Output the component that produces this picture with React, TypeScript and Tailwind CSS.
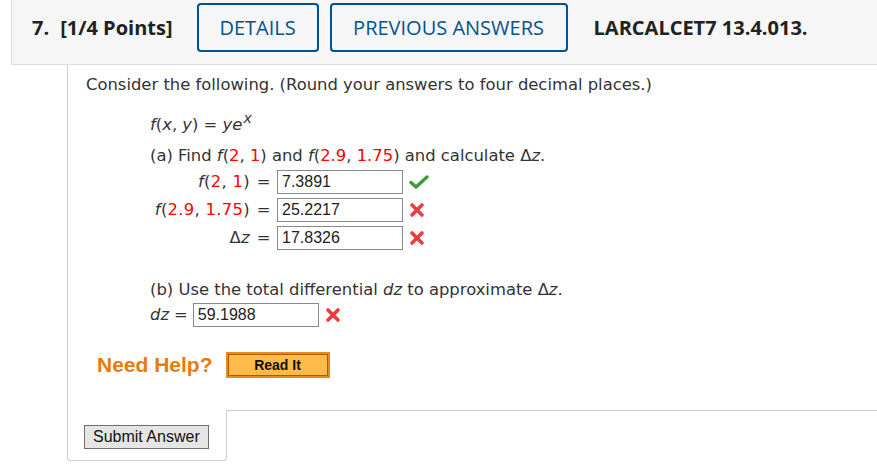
import React from 'react';

const body = { fontFamily: '"DejaVu Sans", Verdana, sans-serif' };
const arial = { fontFamily: '"Liberation Sans", Arial, sans-serif' };

function Check() {
  return (
    <svg width="20" height="14" viewBox="0 0 20 14" className="ml-[6px]">
      <path d="M2 7.5 L7 12 L18 2" fill="none" stroke="#3f9b35" strokeWidth="3.4" strokeLinecap="round" strokeLinejoin="round" />
    </svg>
  );
}

function Cross() {
  return (
    <svg width="16" height="16" viewBox="0 0 16 16" className="ml-[6px]">
      <path d="M3 3 L13 13 M13 3 L3 13" stroke="#ee3b3b" strokeWidth="3.6" strokeLinecap="round" />
    </svg>
  );
}

function R({ children }: { children: React.ReactNode }) {
  return <span className="text-[#ff0000]">{children}</span>;
}

function Row({ label, value, ok }: { label: React.ReactNode; value: string; ok: boolean }) {
  return (
    <div className="flex items-center h-[28px]">
      <div className="w-[100px] text-right whitespace-nowrap tracking-[0.3px]">{label}</div>
      <div className="w-[27px] text-center">=</div>
      <div className="w-[126px] h-[24px] border border-[#8a8a8a] pl-[4px] text-[16px] leading-[22px] text-[#222]" style={arial}>
        {value}
      </div>
      {ok ? <Check /> : <Cross />}
    </div>
  );
}

export default function App() {
  return (
    <div className="w-[877px] h-[472px] bg-white overflow-hidden text-[#333]">
      {/* header */}
      <div className="ml-[11px] h-[65px] bg-[#f6f6f6] border-l border-b border-[#dddddd] flex items-start pt-[3px] font-['Open_Sans',sans-serif] text-[20px]">
        <div className="flex items-center h-[49px] pl-[20px] font-bold text-[#222]">
          <span>7.</span>
          <span className="ml-[11px]">[1/4 Points]</span>
        </div>
        <div className="ml-[24px] h-[49px] w-[122px] border-2 border-[#00538f] rounded-[4px] flex items-center justify-center text-[#00538f]">
          DETAILS
        </div>
        <div className="ml-[11px] h-[49px] w-[238px] border-2 border-[#00538f] rounded-[4px] flex items-center justify-center text-[#00538f]">
          PREVIOUS ANSWERS
        </div>
        <div className="ml-[26px] h-[49px] flex items-center font-bold text-[#222]">LARCALCET7 13.4.013.</div>
      </div>

      {/* content */}
      <div className="ml-[67px] border-l border-[#cccccc] pl-[18px] pt-[8px] h-[345px] text-[16.4px] leading-[24px]" style={body}>
        <p>Consider the following. (Round your answers to four decimal places.)</p>
        <div className="pl-[64px] mt-[16px]">
          <p>
            <i>f</i>(<i>x</i>, <i>y</i>) = <i>y</i><i>e</i>
            <sup className="text-[14px] relative top-[-7px] ml-[1px]">
              <i>x</i>
            </sup>
          </p>
          <p className="mt-[7px]">
            (a) Find <i>f</i>(<R>2</R>, <R>1</R>) and <i>f</i>(<R>2.9</R>, <R>1.75</R>) and calculate Δ<i>z</i>.
          </p>
          <div>
            <Row label={<><i>f</i>(<R>2</R>, <R>1</R>)</>} value="7.3891" ok />
            <Row label={<><i>f</i>(<R>2.9</R>, <R>1.75</R>)</>} value="25.2217" ok={false} />
            <Row label={<>Δ<i>z</i></>} value="17.8326" ok={false} />
          </div>
          <p className="mt-[26px]">
            (b) Use the total differential <i>dz</i> to approximate Δ<i>z</i>.
          </p>
          <div className="flex items-center h-[26px]">
            <span>
              <i>dz</i>
            </span>
            <span className="mx-[5px]">=</span>
            <div className="w-[126px] h-[24px] border border-[#8a8a8a] pl-[4px] text-[16px] leading-[22px] text-[#222]" style={arial}>
              59.1988
            </div>
            <Cross />
          </div>
        </div>
        <div className="flex items-center h-[26px] mt-[24px] pl-[11px]" style={arial}>
          <span className="text-[21px] font-bold text-[#e87b0c]">Need Help?</span>
          <div className="ml-[13px] w-[104px] h-[26px] bg-[#e88a1c] p-[2px]">
            <div className="h-full border border-[#a85a00] bg-[#ffbb4a] flex items-center justify-center text-[14px] leading-none font-bold text-[#111]">
              Read It
            </div>
          </div>
        </div>
      </div>

      {/* footer */}
      <div className="flex">
        <div className="ml-[67px] w-[160px] h-[51px] border-l border-r border-b border-[#cccccc] rounded-b-[4px] pl-[16px] pt-[14px]">
          <button className="h-[24px] px-[8px] border border-[#707070] bg-[#e5e5e5] text-[16px] text-[#111] leading-[20px]" style={arial}>
            Submit Answer
          </button>
        </div>
        <div className="flex-1 border-t border-[#cccccc]" />
      </div>
    </div>
  );
}
